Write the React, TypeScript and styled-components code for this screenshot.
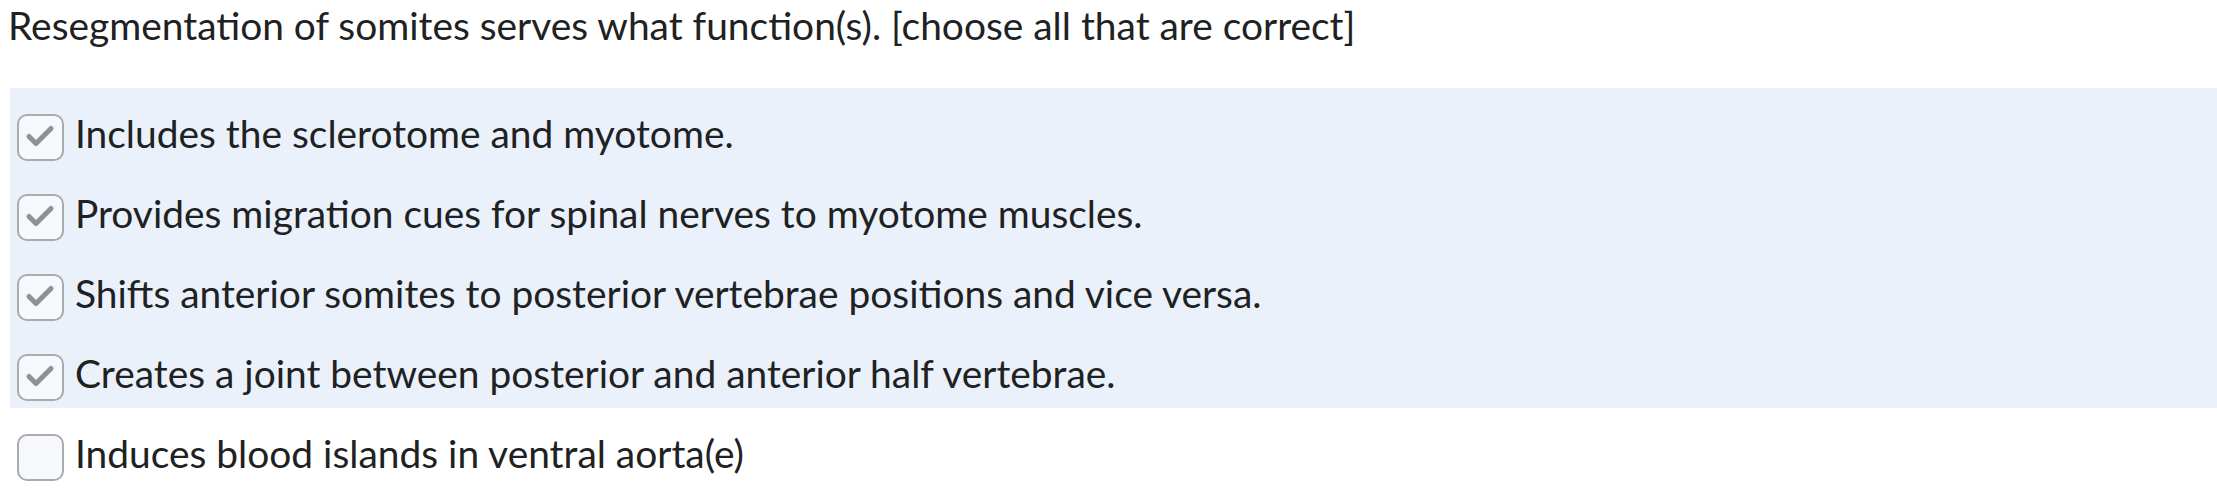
import React from 'react';
import styled, { createGlobalStyle } from 'styled-components';

const GlobalStyle = createGlobalStyle`
    body {
        margin: 0;
        background: #ffffff;
        font-family: Lato, 'Noto Sans', sans-serif;
        color: #202122;
    }
`;

const Page = styled.div`
    padding-top: 2px;
`;

const Question = styled.h1`
    margin: 0 0 39px 0;
    padding-left: 8px;
    font-size: 38.9px;
    font-weight: 400;
    line-height: 1.2;
    color: #202122;
`;

const OptionList = styled.ul`
    list-style: none;
    margin: 0 0 0 10px;
    padding: 0;
`;

const OptionRow = styled.li<{ $selected: boolean }>`
    display: flex;
    align-items: flex-start;
    gap: 11px;
    height: 80px;
    box-sizing: border-box;
    padding: 26px 0 7px 7px;
    background: ${(p) => (p.$selected ? '#eaf1fb' : 'transparent')};
`;

const Box = styled.span`
    flex: none;
    display: flex;
    width: 47px;
    height: 47px;
    box-sizing: border-box;
    border: 2px solid #a9abaf;
    border-radius: 10px;
    background: #f6f8fc;
`;

const Label = styled.span`
    margin-top: -4px;
    font-size: 38.9px;
    line-height: 1.2;
    color: #202122;
    white-space: nowrap;
`;

const options = [
    { text: 'Includes the sclerotome and myotome.', checked: true },
    { text: 'Provides migration cues for spinal nerves to myotome muscles.', checked: true },
    { text: 'Shifts anterior somites to posterior vertebrae positions and vice versa.', checked: true },
    { text: 'Creates a joint between posterior and anterior half vertebrae.', checked: true },
    { text: 'Induces blood islands in ventral aorta(e)', checked: false },
];

function Check() {
    return (
        <svg width="43" height="43" viewBox="0 0 43 43">
            <path
                d="M10 20.5 L17 27.5 L32 12.5"
                fill="none"
                stroke="#8e9196"
                strokeWidth="5"
                strokeLinecap="round"
                strokeLinejoin="round"
            />
        </svg>
    );
}

export default function App() {
    return (
        <>
            <GlobalStyle />
            <Page>
                <Question>Resegmentation of somites serves what function(s). [choose all that are correct]</Question>
                <OptionList>
                    {options.map((o) => (
                        <OptionRow key={o.text} $selected={o.checked}>
                            <Box>{o.checked && <Check />}</Box>
                            <Label>{o.text}</Label>
                        </OptionRow>
                    ))}
                </OptionList>
            </Page>
        </>
    );
}
